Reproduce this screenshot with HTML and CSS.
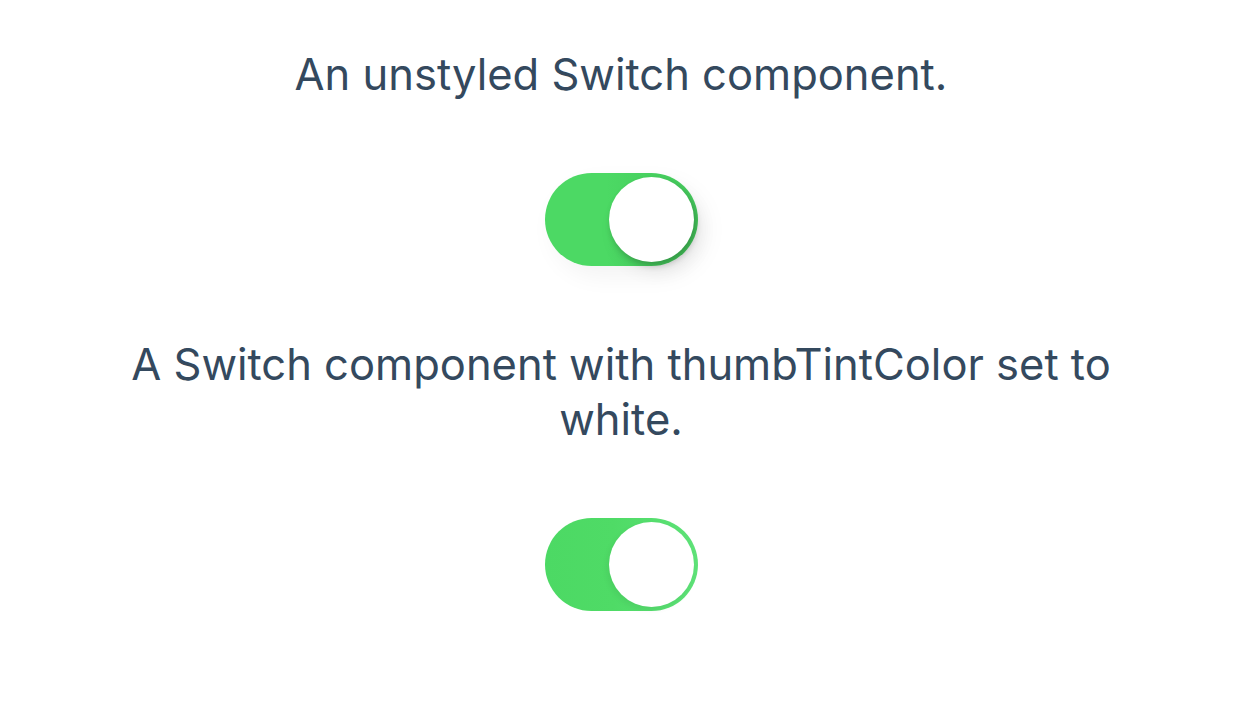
FILE: index.html
```html
<!DOCTYPE html>
<html lang="en">
<head>
<meta charset="utf-8">
<title>Switch examples</title>
<link rel="stylesheet" href="styles.css">
</head>
<body>
<main class="demo">
  <section class="example">
    <p class="caption">An unstyled Switch component.</p>
    <div class="switch switch--default" role="switch" aria-checked="true">
      <span class="switch__thumb"></span>
    </div>
  </section>
  <section class="example">
    <p class="caption">A Switch component with thumbTintColor set to white.</p>
    <div class="switch switch--white" role="switch" aria-checked="true">
      <span class="switch__thumb"></span>
    </div>
  </section>
</main>
</body>
</html>
```

FILE: styles.css
```css
html, body {
  margin: 0;
  padding: 0;
  background: #ffffff;
}

.demo {
  display: flex;
  flex-direction: column;
  align-items: center;
  padding-top: 47px;
  font-family: Inter, "Noto Sans", sans-serif;
  color: #34495e;
}

.example {
  display: flex;
  flex-direction: column;
  align-items: center;
  gap: 71px;
  margin-bottom: 71px;
}

.caption {
  margin: 0;
  width: 1020px;
  text-align: center;
  font-size: 43.5px;
  line-height: 55px;
  font-weight: 400;
}

.switch {
  position: relative;
  width: 153px;
  height: 93px;
  border-radius: 47px;
  background: #4cd964;
  display: flex;
  align-items: center;
  justify-content: flex-end;
  padding-right: 4px;
  box-sizing: border-box;
}

.switch__thumb {
  width: 85px;
  height: 85px;
  border-radius: 50%;
  background: #ffffff;
}

.switch--default .switch__thumb {
  box-shadow: 2px 4px 6px rgba(0, 0, 0, 0.2), 6px 10px 18px rgba(0, 0, 0, 0.07);
}

.switch--default {
  background: linear-gradient(90deg, #4cd964 0%, #4cd964 40%, #47cf5f 75%, #45c95c 100%);
  box-shadow: 8px 10px 24px rgba(0, 0, 0, 0.05);
}

.switch--white {
  background: linear-gradient(90deg, #4cd964 0%, #4fdb66 45%, #5ee278 100%);
}

.switch--white .switch__thumb {
  box-shadow: -2px 3px 6px rgba(0, 0, 0, 0.06);
}
```
